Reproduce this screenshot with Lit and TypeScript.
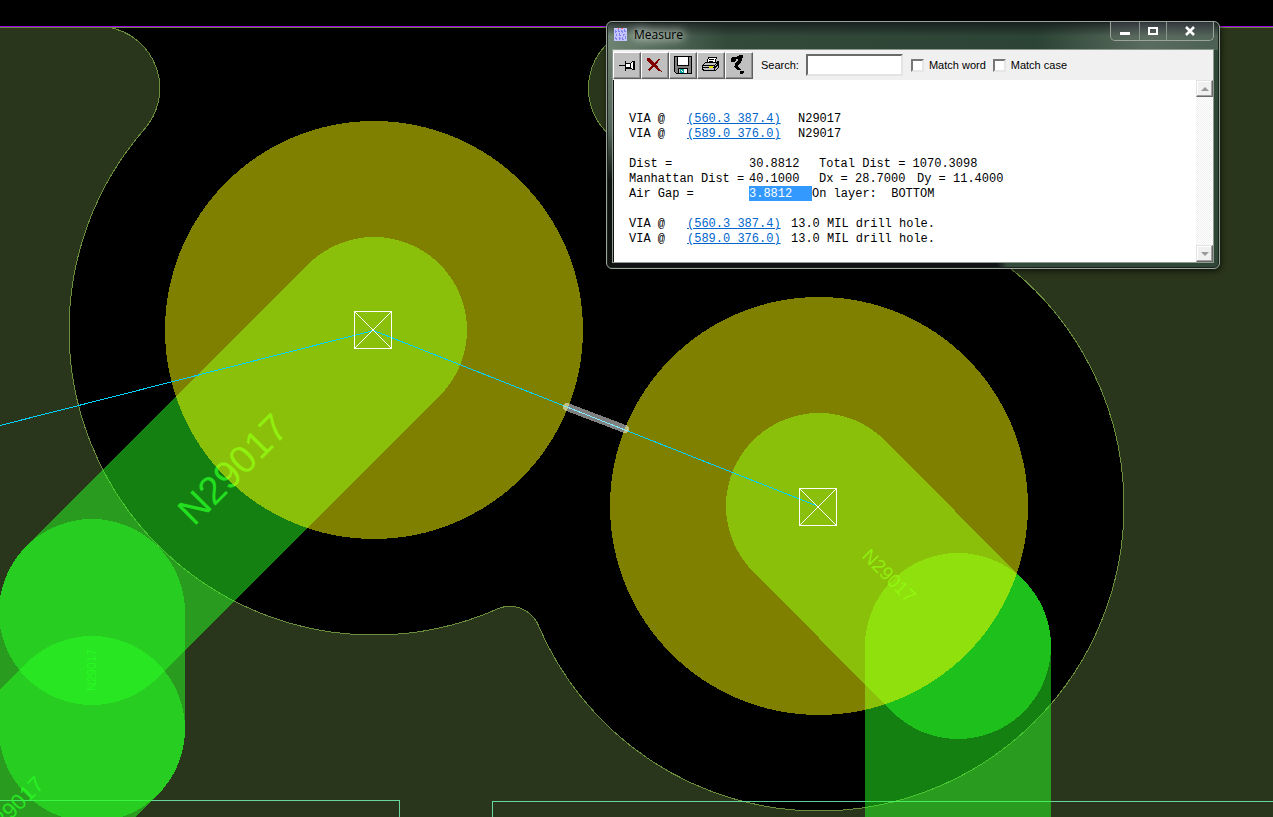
import { LitElement, html, svg, css } from "lit";
import { customElement, property } from "lit/decorators.js";

/* Toolbar icons on a 20x20 grid. */
const icons: Record<string, unknown> = {
  Pin: svg`
    <path d="M2 10.5H8" stroke="#000" fill="none"/>
    <path d="M8.5 5.5V15.5M9 8.5H13.500V12.500H9M13.500 8.500L15.500 6.500H16.500V14.500H15.500L13.500 12.500" stroke="#000" fill="#fff"/>
    <path d="M9 13H14M17.500 6V15" stroke="#000" fill="none"/>`,
  Close: svg`
    <path d="M2 3L5 4L16 16L14 15.500L2 5Z" fill="#800000" stroke="#800000"/>
    <path d="M14.500 4L3.500 15.500" stroke="#800000" stroke-width="2" fill="none"/>`,
  Save: svg`
    <path d="M1.500 1.500H18.500V18.500H3.500L1.500 16.500Z" fill="#808080" stroke="#000"/>
    <path d="M4.500 1.500H15.500V10.500H4.500Z" fill="#fff" stroke="#000"/>
    <path d="M5.500 13.500H14.500V18.500H5.500Z" fill="#c0c0c0" stroke="#000"/>
    <path d="M7 14H11V18H7Z" fill="#00a0a0"/><path d="M8 15h1v1h1v1h-1v-1h-1z" fill="#fff"/>
    <path d="M11 14H14V18H11Z" fill="#fff"/>`,
  Print: svg`
    <path d="M5.500 8.500L7.500 2.500H15.500L13.500 8.500Z" fill="#fff" stroke="#000"/>
    <path d="M8 4.500H13M7.500 6.500H12" stroke="#000" fill="none"/>
    <path d="M1.500 10.500L4.500 7.500H14.500L17.500 6.500V12.500L14.500 15.500H3.500L1.500 14.500Z" fill="#c0c0c0" stroke="#000"/>
    <path d="M2 10.500H13.500V15M14 10L17 7.500M2 12.500H13M14 12.500L17 9.500" stroke="#000" fill="none"/>
    <path d="M8 11H12V13H8Z" fill="#e8e000"/>`,
  Help: svg`
    <path d="M2 4L5 2H8L11 0.500H13V3L11.500 7L8.500 10V12L11 14.500L8 14L6 11.500L7 8.500L9.500 6L10 3L7 4L5 7L3 6.500Z" fill="#000" stroke="#000"/>
    <path d="M11 16H15V18L13 19H11Z" fill="#000"/>`,
};

@customElement("board-canvas")
class BoardCanvas extends LitElement {
  static styles = css`
    :host { display: block; background: #000; overflow: hidden; }
    .board { display: block; overflow: hidden; width: 100%; height: 100%; }
    .crisp { shape-rendering: crispEdges; }
    .plane { fill: #2a361b; }
    .edge { fill: none; stroke: #6b8e3c; }
    .purple { stroke: #a000f0; }
    .top-edge { stroke: #6b8e3c; }
    .silk { fill: none; stroke: #78ffc0; stroke-opacity: 0.8; }
    .trace { fill: none; stroke: #28ff24; stroke-opacity: 0.5; stroke-width: 186; stroke-linecap: round; }
    .net { font-family: "Liberation Sans", Arial, sans-serif; fill: #28ff24; fill-opacity: 0.75; }
    .pad { fill: #ffff00; fill-opacity: 0.5; }
    .gap { stroke: #fff; stroke-opacity: 0.5; stroke-width: 8; stroke-linecap: round; }
    .rat { stroke: #00d2ff; fill: none; }
    .via { stroke: #fff; fill: none; }
  `;

  render() {
    const outline = `H107 A62 62 0 0 1 143.900 129.800
      A305 305 0 0 0 69 330 A305 305 0 0 0 374 635 A305 305 0 0 0 497.400 609
      A31 31 0 0 1 537.400 623.200
      A305 305 0 0 0 819 811 A305 305 0 0 0 1124 506 A305 305 0 0 0 666 242
      A305 305 0 0 0 605 130.600 A62 62 0 0 1 641 27`;
    const vias = [[373, 330], [818, 507]];
    return html`
      <svg class="board" role="img" aria-label="Board layout">
        <g class="crisp">
          <path class="plane" d="M-10 27 ${outline} H4000 V3000 H-10 Z"/>
          <path class="edge" d="M-10 27 ${outline}"/>
          <path class="purple" d="M0 26.500H4000"/>
          <path class="top-edge" d="M0 27.500H4000"/>
          <path class="silk" d="M0 800.500H399.500V3000M492.500 3000V801.500H4000"/>
          <path class="trace" d="M374 330L92 612"/>
          <path class="trace" d="M92 612V729"/>
          <path class="trace" d="M92 729L-188 1009"/>
          <path class="trace" d="M819 506L958 646"/>
          <path class="trace" d="M958 646V3000"/>
        </g>
        <text class="net" font-size="39" transform="translate(194 527) rotate(-45)">N29017</text>
        <text class="net" font-size="19" transform="translate(861 557) rotate(45)">N29017</text>
        <text class="net" font-size="12" transform="translate(96 691) rotate(-90)">N29017</text>
        <text class="net" font-size="22" transform="translate(-9 840) rotate(-45)">N29017</text>
        <g class="crisp">
          <circle class="pad" cx="374" cy="330" r="209"/>
          <circle class="pad" cx="819" cy="506" r="209"/>
          <path class="rat" d="M0 425.500L373.500 330.500L818.500 506.500"/>
          <path class="gap" d="M567 407L625 429"/>
          ${vias.map(([x, y]) => svg`<path class="via"
            d="M${x - 18.5} ${y - 18.5}h37v37h-37zl37 37m0 -37l-37 37"/>`)}
        </g>
      </svg>`;
  }
}

@customElement("tool-button")
class ToolButton extends LitElement {
  @property() name = "";
  static styles = css`
    :host { display: block; }
    .tool {
      display: grid; place-items: center; width: 28px; height: 27px; padding: 0;
      background: #c0c0c0; border: 1px solid; border-color: #fff #606060 #606060 #fff;
      box-shadow: inset -1px -1px #909090;
    }
    .icon { display: block; width: 20px; height: 20px; shape-rendering: crispEdges; }
  `;
  render() {
    return html`<button class="tool" aria-label=${this.name}>
      <svg class="icon" viewBox="0 0 20 20">${icons[this.name]}</svg>
    </button>`;
  }
}

@customElement("measure-window")
class MeasureWindow extends LitElement {
  static styles = css`
    :host {
      display: flex; flex-direction: column; box-sizing: border-box; padding: 0 5px 5px;
      border: 1px solid #9aa69c; border-radius: 6px;
      background:
        linear-gradient(#0c0c14aa, #0c0c1400 14px),
        linear-gradient(90deg, #6f8473 0, #33493a 120px, #2c4435 430px, #5a6c5e 540px, #4c6152 100%) 0 0 / 100% 28px no-repeat,
        linear-gradient(#6f8070 0, #54665a 80px, #0e1310 130px, #0e1310 100%) 0 28px / 8px 100% no-repeat,
        linear-gradient(90deg, #101114 390px, #344a3b 400px, #2f4636 100%);
      box-shadow: inset 0 0 0 1px #1b221d, 1px 2px 6px #000a;
      font: 11px/14px "Liberation Sans", Arial, sans-serif; color: #000;
    }
    .title { display: flex; align-items: flex-start; height: 27px; }
    .name {
      display: flex; align-items: center; gap: 7px; flex: 1; height: 25px; padding-left: 2px; margin: 0;
      font: 12px/16px "Open Sans", "Noto Sans", sans-serif;
      text-shadow: 0 0 8px #cfd8d0, 0 0 8px #cfd8d0, 0 0 12px #cfd8d0;
    }
    .glyph { width: 13px; height: 13px; shape-rendering: crispEdges; }
    .frame {
      display: flex; height: 18px; border: 1px solid #9ba39d; border-top: 0;
      border-radius: 0 0 5px 5px; overflow: hidden;
    }
    .win {
      display: grid; place-items: center; width: 27px; padding: 0; border: 0;
      border-left: 1px solid #8b958e; background: linear-gradient(#4a4a5866, #5f6f6366);
    }
    .win:first-child { border-left: 0; width: 28px; }
    .win:last-child { width: 47px; }
    .win svg { width: 12px; height: 12px; }
    .client { flex: 1; border: 1px solid #8c9a90; box-shadow: inset 1px 1px #111; background: #fff; }
    .bar { display: flex; align-items: center; height: 30px; background: #f0f0f0; }
    .tools { display: flex; }
    .search { display: flex; align-items: center; gap: 7px; margin: 0 8px; }
    .box {
      box-sizing: border-box; width: 97px; height: 22px; background: #fff;
      border: 2px solid; border-color: #6a6a6a #e3e3e3 #e3e3e3 #6a6a6a; border-radius: 0; padding: 1px 2px; font: inherit;
    }
    .check { display: flex; align-items: center; gap: 5px; margin-right: 7px; }
    .tick {
      appearance: none; width: 13px; height: 13px; margin: 0; background: #fff;
      border: 2px solid; border-color: #777 #e6e6e6 #e6e6e6 #777;
    }
    .body { display: flex; height: 182px; }
    .report {
      flex: 1; margin: 0; padding: 31px 0 0 16px; white-space: pre;
      font: 12px/17px "Liberation Mono", "Courier New", monospace;
    }
    .row { display: flex; height: 15px; }
    .via { width: 58px; }
    .label { width: 120px; }
    .value { width: 70px; }
    .delta { width: 98px; }
    .picked { width: 63px; background: #3399ff; color: #fff; }
    .point { width: 104px; }
    .net { padding-left: 7px; }
    a { color: #0066cc; }
    .scroll {
      display: flex; flex-direction: column; justify-content: space-between; width: 17px;
      background: repeating-conic-gradient(#fff 0 25%, #f0f0f0 0 50%) 0 0 / 2px 2px;
    }
    .arrow {
      display: grid; place-items: center; width: 17px; height: 17px; padding: 0; background: #f0f0f0;
      border: 1px solid; border-color: #e3e3e3 #696969 #696969 #e3e3e3; box-shadow: inset -1px -1px #a0a0a0, inset 1px 1px #fff;
    }
    .arrow svg { width: 8px; height: 4px; fill: #999; }
  `;

  private via(point: string, rest: string, net = false) {
    return html`<div class="row"><span class="via">VIA @</span><span class="point"><a href="#">${point}</a></span><span class=${net ? "net" : ""}>${rest}</span></div>`;
  }

  render() {
    return html`
      <header class="title">
        <h1 class="name">
          <svg class="glyph" viewBox="0 0 13 13" aria-hidden="true">
            <path d="M0 0H13V13H0Z" fill="#c4c4ff"/>
            <path d="M1 2h1v1h1v1h-1v1h-1zM4 1h1v2h1v1h-2zM7 2h1v1h1v2h-1v-1h-1zM10 1h1v2h1v1h-2zM2 6h1v2h-1zM5 5h1v2h1v1h-2zM9 6h2v1h-1v1h-1zM1 9h1v1h1v2h-1v-1h-1zM5 9h1v1h1v1h-1v1h-1zM8 9h1v2h1v1h-2zM11 8h1v3h-1z" fill="#8080f0"/>
            <path d="M4 0h1v1h-1zM7 0h2v1h-2z" fill="#ff6080"/>
          </svg>Measure
        </h1>
        <div class="frame">
          <button class="win" aria-label="Minimize"><svg viewBox="0 0 12 12"><path d="M1 7H11V10H1Z" fill="#fff"/></svg></button>
          <button class="win" aria-label="Maximize"><svg viewBox="0 0 12 12"><path d="M2 3H10V9H2Z" fill="none" stroke="#fff" stroke-width="2"/></svg></button>
          <button class="win" aria-label="Close window"><svg viewBox="0 0 12 12"><path d="M2 2L10 10M10 2L2 10" fill="none" stroke="#fff" stroke-width="2.500"/></svg></button>
        </div>
      </header>
      <section class="client">
        <div class="bar">
          <div class="tools">${Object.keys(icons).map((n) => html`<tool-button name=${n}></tool-button>`)}</div>
          <label class="search">Search: <input class="box" type="text"></label>
          <label class="check"><input class="tick" type="checkbox">Match word</label>
          <label class="check"><input class="tick" type="checkbox">Match case</label>
        </div>
        <div class="body">
          <div class="report">${[
            this.via("(560.3 387.4)", "N29017", true),
            this.via("(589.0 376.0)", "N29017", true),
            html`<div class="row"></div>`,
            html`<div class="row"><span class="label">Dist =</span><span class="value">30.8812</span><span>Total Dist = 1070.3098</span></div>`,
            html`<div class="row"><span class="label">Manhattan Dist =</span><span class="value">40.1000</span><span class="delta">Dx = 28.7000</span><span>Dy = 11.4000</span></div>`,
            html`<div class="row"><span class="label">Air Gap =</span><span class="picked">3.8812</span><span>On layer:  BOTTOM</span></div>`,
            html`<div class="row"></div>`,
            this.via("(560.3 387.4)", "13.0 MIL drill hole."),
            this.via("(589.0 376.0)", "13.0 MIL drill hole."),
          ]}</div>
          <div class="scroll">
            <button class="arrow" aria-label="Scroll up"><svg viewBox="0 0 8 4"><path d="M0 4L4 0L8 4Z"/></svg></button>
            <button class="arrow" aria-label="Scroll down"><svg viewBox="0 0 8 4"><path d="M0 0L4 4L8 0Z"/></svg></button>
          </div>
        </div>
      </section>`;
  }
}

@customElement("app-root")
class AppRoot extends LitElement {
  static styles = css`
    :host { display: block; position: relative; height: 100vh; overflow: hidden; background: #000; }
    .canvas { height: 100%; }
    .window { position: absolute; left: 606px; top: 21px; width: 614px; }
  `;
  render() {
    return html`
      <board-canvas class="canvas"></board-canvas>
      <measure-window class="window"></measure-window>`;
  }
}
